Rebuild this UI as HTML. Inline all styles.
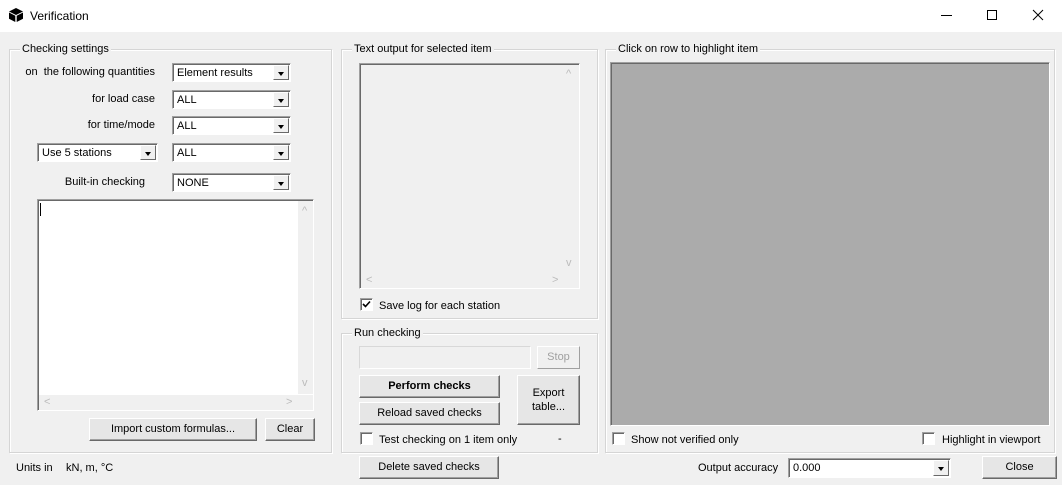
<!DOCTYPE html>
<html><head><meta charset="utf-8"><style>
*{box-sizing:border-box}
body{margin:0;width:1062px;height:485px;background:#f0f0f0;font-family:"Liberation Sans",sans-serif;font-size:11px;color:#000;position:relative;overflow:hidden}
.a{position:absolute}
.t{position:absolute;white-space:nowrap;line-height:14px}
.r{position:absolute;white-space:nowrap;line-height:14px;right:907px;text-align:right}
.gb{position:absolute;border:1px solid #d5d5d5;box-shadow:inset 1px 1px 0 #fff,1px 1px 0 #fff}
.gl{position:absolute;background:#f0f0f0;padding:0 2px;top:-8px;left:10px;line-height:14px;white-space:nowrap}
.cb{position:absolute;background:#fff;border:1px solid;border-color:#a0a0a0 #fff #fff #a0a0a0;box-shadow:inset 1px 1px 0 #696969}
.cb span{position:absolute;left:4px;top:2px;line-height:14px}
.dd{position:absolute;right:1px;top:1px;bottom:1px;width:16px;background:#f0f0f0;border:1px solid;border-color:#fff #696969 #696969 #fff}
.dd:after{content:"";position:absolute;left:4px;top:6px;border-left:3.5px solid transparent;border-right:3.5px solid transparent;border-top:4px solid #000}
.btn{position:absolute;background:#e6e6e6;border:1px solid;border-color:#fff #696969 #696969 #fff;box-shadow:inset -1px -1px 0 #a0a0a0;text-align:center;line-height:20px;white-space:nowrap}
.sunk{position:absolute;border:1px solid;border-color:#a0a0a0 #fff #fff #a0a0a0;box-shadow:inset 1px 1px 0 #696969}
.chk{position:absolute;width:13px;height:13px;background:#fff;border:1px solid;border-color:#a0a0a0 #fff #fff #a0a0a0;box-shadow:inset 1px 1px 0 #696969}
.sa{position:absolute;color:#bbb;font-size:11px;line-height:11px}
</style></head><body>
<div class="a" style="left:0;top:0;width:1062px;height:32px;background:#fff"></div>
<svg class="a" style="left:8px;top:7px" width="16" height="16" viewBox="0 0 16 16"><path d="M8 1L15 4.5 8 8 1 4.5Z" fill="#000"/><path d="M1 5.5L7.3 8.8V15L1 11.8Z M15 5.5L8.7 8.8V15L15 11.8Z" fill="#000"/></svg>
<div class="t" style="left:30px;top:9px;font-size:12px">Verification</div>
<div class="a" style="left:941px;top:15px;width:11px;height:1px;background:#000"></div>
<div class="a" style="left:987px;top:10px;width:10px;height:10px;border:1px solid #000"></div>
<svg class="a" style="left:1032px;top:9px" width="12" height="12"><path d="M1 1L11 11M11 1L1 11" stroke="#000" stroke-width="1"/></svg>

<div class="gb" style="left:9px;top:49px;width:323px;height:404px"><div class="gl">Checking settings</div></div>
<div class="r" style="top:65px">on&nbsp; the following quantities</div>
<div class="r" style="top:92px">for load case</div>
<div class="r" style="top:118px">for time/mode</div>
<div class="r" style="top:175px;right:917px">Built-in checking</div>
<div class="cb" style="left:172px;top:63px;width:119px;height:19px"><span>Element results</span><div class="dd"></div></div>
<div class="cb" style="left:172px;top:90px;width:119px;height:19px"><span>ALL</span><div class="dd"></div></div>
<div class="cb" style="left:172px;top:116px;width:119px;height:19px"><span>ALL</span><div class="dd"></div></div>
<div class="cb" style="left:172px;top:143px;width:119px;height:19px"><span>ALL</span><div class="dd"></div></div>
<div class="cb" style="left:37px;top:143px;width:121px;height:19px"><span>Use 5 stations</span><div class="dd"></div></div>
<div class="cb" style="left:172px;top:173px;width:119px;height:19px"><span>NONE</span><div class="dd"></div></div>
<div class="sunk" style="left:37px;top:199px;width:277px;height:212px;background:#fff"></div>
<div class="a" style="left:298px;top:201px;width:15px;height:193px;background:#f0f0f0"></div>
<div class="a" style="left:39px;top:395px;width:274px;height:15px;background:#f0f0f0"></div>
<div class="sa" style="left:302px;top:206px">^</div>
<div class="sa" style="left:302px;top:378px">v</div>
<div class="sa" style="left:44px;top:397px">&lt;</div>
<div class="sa" style="left:286px;top:397px">&gt;</div>
<div class="a" style="left:40px;top:203px;width:1px;height:13px;background:#000"></div>
<div class="btn" style="left:89px;top:418px;width:168px;height:23px">Import custom formulas...</div>
<div class="btn" style="left:265px;top:418px;width:50px;height:23px">Clear</div>
<div class="t" style="left:16px;top:461px">Units in</div>
<div class="t" style="left:66px;top:461px">kN, m, °C</div>

<div class="gb" style="left:341px;top:49px;width:257px;height:270px"><div class="gl">Text output for selected item</div></div>
<div class="sunk" style="left:359px;top:63px;width:221px;height:226px"></div>
<div class="sa" style="left:566px;top:69px">^</div>
<div class="sa" style="left:566px;top:258px">v</div>
<div class="sa" style="left:366px;top:275px">&lt;</div>
<div class="sa" style="left:552px;top:275px">&gt;</div>
<div class="chk" style="left:360px;top:298px"></div>
<svg class="a" style="left:362px;top:300px" width="9" height="9"><path d="M1 4L3.5 6.5 8 1.5" stroke="#000" stroke-width="1.6" fill="none"/></svg>
<div class="t" style="left:379px;top:299px">Save log for each station</div>

<div class="gb" style="left:341px;top:333px;width:257px;height:120px"><div class="gl">Run checking</div></div>
<div class="sunk" style="left:359px;top:346px;width:172px;height:23px;box-shadow:none;border-color:#d8d8d8 #fff #fff #d8d8d8"></div>
<div class="btn" style="left:537px;top:346px;width:43px;height:23px;color:#a0a0a0;background:#f0f0f0;box-shadow:none;border-color:#fff #a0a0a0 #a0a0a0 #fff">Stop</div>
<div class="btn" style="left:359px;top:375px;width:141px;height:23px;font-weight:bold">Perform checks</div>
<div class="btn" style="left:359px;top:402px;width:141px;height:23px">Reload saved checks</div>
<div class="btn" style="left:517px;top:375px;width:63px;height:50px;line-height:14px;padding-top:10px">Export<br>table...</div>
<div class="chk" style="left:360px;top:432px"></div>
<div class="t" style="left:379px;top:433px">Test checking on 1 item only</div>
<div class="t" style="left:558px;top:432px">-</div>
<div class="btn" style="left:359px;top:456px;width:140px;height:23px">Delete saved checks</div>

<div class="gb" style="left:605px;top:49px;width:450px;height:404px"><div class="gl">Click on row to highlight item</div></div>
<div class="sunk" style="left:610px;top:62px;width:440px;height:364px;background:#ababab"></div>
<div class="chk" style="left:612px;top:432px"></div>
<div class="t" style="left:631px;top:433px">Show not verified only</div>
<div class="chk" style="left:922px;top:432px"></div>
<div class="t" style="left:942px;top:433px">Highlight in viewport</div>
<div class="t" style="left:698px;top:461px">Output accuracy</div>
<div class="cb" style="left:788px;top:458px;width:163px;height:20px"><span>0.000</span><div class="dd"></div></div>
<div class="btn" style="left:982px;top:456px;width:75px;height:23px">Close</div>
</body></html>
